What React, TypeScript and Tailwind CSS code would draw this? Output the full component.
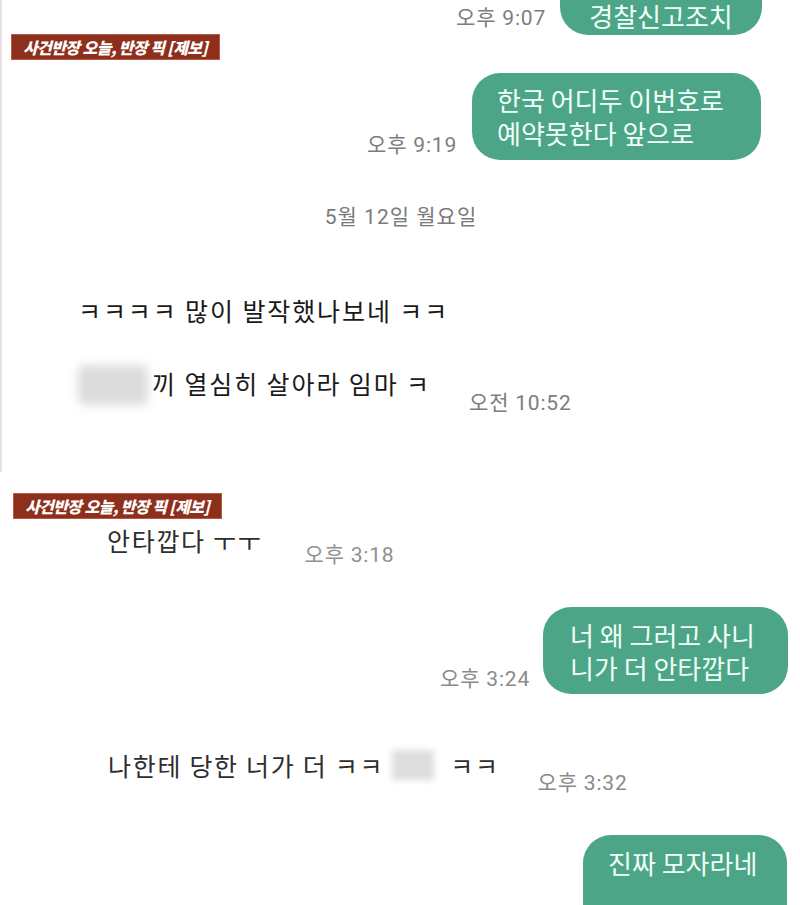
import React from "react";

const Badge = ({ cls }: { cls: string }) => (
  <div
    className={`absolute ${cls} h-[26px] w-[209px] bg-[#8e2e1c] border border-[#b35a44] flex items-center pl-[11px] text-white text-[16px] font-extrabold italic tracking-[-0.6px] leading-none`}
  >
    사건반장 오늘, 반장 픽 [제보]
  </div>
);

const Time = ({ children, cls }: { children: React.ReactNode; cls: string }) => (
  <div
    className={`font-['Roboto','Noto_Sans_CJK_KR',sans-serif] text-[21px] leading-[24px] tracking-[0.8px] text-[#7d7d7d] whitespace-nowrap ${cls}`}
  >
    {children}
  </div>
);

export default function App() {
  return (
    <div className="w-[800px] h-[905px] bg-white overflow-hidden font-['Noto_Sans_CJK_KR','Noto_Sans',sans-serif]">
      {/* top panel */}
      <div className="relative h-[472px] border-l-2 border-[#e4e4e4] overflow-hidden">
        <div className="flex flex-col">
          <div className="flex justify-end items-end pr-[38px] mt-[-27px]">
            <Time cls="mb-[5px] mr-[14px]">오후 9:07</Time>
            <div className="w-[202px] h-[62px] rounded-[28px] bg-[#4da587] text-[#f0fff8] text-[26px] leading-[33px] pt-[26px] text-center">
              경찰신고조치
            </div>
          </div>
          <div className="flex justify-end items-end pr-[39px] mt-[38px]">
            <Time cls="mb-[3px] mr-[15px]">오후 9:19</Time>
            <div className="w-[289px] h-[87px] rounded-[28px] bg-[#4da587] text-[#f0fff8] text-[26px] leading-[33px] pt-[10px] pl-[25px]">
              <div>한국 어디두 이번호로</div>
              <div>예약못한다 앞으로</div>
            </div>
          </div>
          <div className="mt-[45px] text-center font-['Roboto','Noto_Sans_CJK_KR',sans-serif] text-[21px] leading-[24px] tracking-[1px] text-[#7a7a7a]">
            5월 12일 월요일
          </div>
          <div className="mt-[65px] pl-[76px] text-[25px] leading-[32px] tracking-[1.9px] text-[#1a1a1a] whitespace-nowrap">
            ㅋㅋㅋㅋ 많이 발작했나보네 ㅋㅋ
          </div>
          <div className="mt-[39px] pl-[76px] flex items-start">
            <div className="w-[70px] h-[40px] rounded-[6px] bg-[#dcdcdc] blur-[5px]" />
            <div className="ml-[4px] mt-[2px] text-[25px] leading-[32px] tracking-[1.9px] text-[#1a1a1a] whitespace-nowrap">
              끼 열심히 살아라 임마 ㅋ
            </div>
            <Time cls="ml-[38px] mt-[26px]">오전 10:52</Time>
          </div>
        </div>
        <Badge cls="left-[9px] top-[34px]" />
      </div>

      {/* bottom panel */}
      <div className="relative h-[433px] overflow-hidden">
        <div className="flex flex-col">
          <div className="flex items-start pl-[107px] pt-[52px]">
            <div className="text-[25px] leading-[32px] tracking-[1.7px] text-[#2e2e2e] whitespace-nowrap">안타깝다 ㅜㅜ</div>
            <Time cls="ml-[42px] mt-[19px] text-[#909090]">오후 3:18</Time>
          </div>
          <div className="flex justify-end items-end pr-[12px] mt-[40px]">
            <Time cls="mb-[3px] mr-[13px] text-[#8a8a8a]">오후 3:24</Time>
            <div className="w-[245px] h-[87px] rounded-[28px] bg-[#4da587] text-[#f0fff8] text-[26px] leading-[33px] pt-[11px] pl-[27px]">
              <div>너 왜 그러고 사니</div>
              <div>니가 더 안타깝다</div>
            </div>
          </div>
          <div className="flex items-start pl-[108px] mt-[55px]">
            <div className="text-[25px] leading-[32px] tracking-[1.7px] text-[#2e2e2e] whitespace-nowrap">나한테 당한 너가 더 ㅋㅋ</div>
            <div className="ml-[8px] mt-[1px] w-[42px] h-[30px] bg-[#dedede] blur-[3px]" />
            <div className="ml-[16px] text-[25px] leading-[32px] tracking-[1.7px] text-[#2e2e2e] whitespace-nowrap">ㅋㅋ</div>
            <Time cls="ml-[38px] mt-[22px] text-[#8a8a8a]">오후 3:32</Time>
          </div>
          <div className="flex justify-end pr-[13px] mt-[40px]">
            <div className="w-[204px] h-[110px] rounded-[28px] bg-[#4da587] text-[#f0fff8] text-[26px] leading-[33px] pt-[11px] pl-[25px]">
              진짜 모자라네
            </div>
          </div>
        </div>
        <Badge cls="left-[13px] top-[21px]" />
      </div>
    </div>
  );
}
